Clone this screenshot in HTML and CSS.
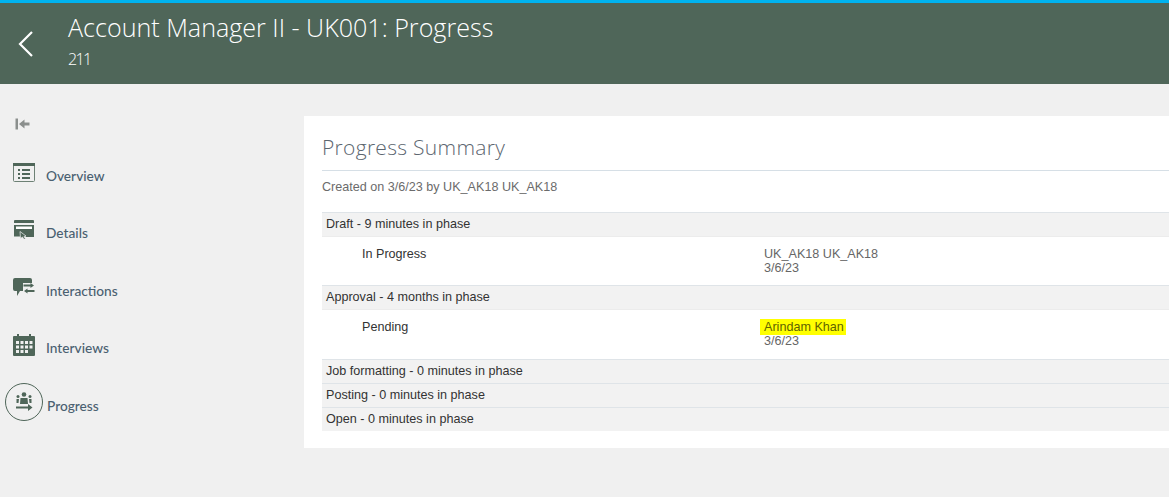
FILE: index.html
```html
<!DOCTYPE html>
<html lang="en">
<head>
    <meta charset="UTF-8">
    <title>Progress</title>
    <link rel="stylesheet" href="styles.css">
</head>
<body>

    <header class="page-header">
        <svg class="back-icon" viewBox="0 0 16 28" width="16" height="28"><path d="M14 2 L2 14 L14 26" fill="none" stroke="#fff" stroke-width="2.2"/></svg>
        <div class="header-text">
            <h1>Account Manager II - UK001: Progress</h1>
            <div class="header-sub">211</div>
        </div>
    </header>

    <div class="page-body">
        <nav class="side-nav">
            <svg class="collapse-icon" viewBox="0 0 15 12" width="15" height="12"><path d="M0.500 0.500h2.500v11H0.500z M14.500 4.500v3H9.500v3L4 6l5.500-4.500v3z" fill="#8b8f8d"/></svg>

            <a class="nav-item">
                <svg class="nav-icon" viewBox="0 0 22 19" width="22" height="19"><rect x="0.5" y="0.5" width="21" height="18" rx="1" fill="none" stroke="#6d8175"/><path d="M0 0h22v3H0z" fill="#4f6659"/><path d="M5 6h2v2H5z M9 6h8v2H9z M5 10h2v2H5z M9 10h8v2H9z M5 14h2v2H5z M9 14h8v2H9z" fill="#4f6659"/></svg>
                <span>Overview</span>
            </a>
            <a class="nav-item">
                <svg class="nav-icon" viewBox="0 0 22 19" width="22" height="19"><path d="M2 0h18a1 1 0 0 1 1 1v2H1V1a1 1 0 0 1 1-1z M1 5h20v12H13l-2-2H1z" fill="#4f6659"/><path d="M3 6.500h16v2.500H3z" fill="#fff"/><path d="M1 15h11v1.500H1z" fill="#4f6659"/><path d="M7 11.500l6 4.500-2 .5 1.500 2.500-1.500.5-1.500-2.500-2 1.500z" fill="#4f6659" stroke="#f0f0f0" stroke-width="0.7"/></svg>
                <span>Details</span>
            </a>
            <a class="nav-item">
                <svg class="nav-icon" viewBox="0 0 22 19" width="22" height="19"><path d="M2 0h15a2 2 0 0 1 2 2v3H10v8H7l-3 5v-5H2a2 2 0 0 1-2-2V2a2 2 0 0 1 2-2z" fill="#4f6659"/><path d="M10.500 6.500h7V5l3.500 2.500L17.500 10V8.500h-7z M21.500 12h-7v-1.500L11 13l3.500 2.500V14h7z" fill="#4f6659"/></svg>
                <span>Interactions</span>
            </a>
            <a class="nav-item">
                <svg class="nav-icon" viewBox="0 0 22 22" width="22" height="22"><path fill-rule="evenodd" fill="#4f6659" d="M1 2h3V0h2v2h10V0h2v2h3a1 1 0 0 1 1 1v18a1 1 0 0 1-1 1H1a1 1 0 0 1-1-1V3a1 1 0 0 1 1-1z M3 7v3h3V7z M7.500 7v3h3V7z M12 7v3h3V7z M16.500 7v3h3V7z M3 11.500v3h3v-3z M7.500 11.500v3h3v-3z M12 11.500v3h3v-3z M16.500 11.500v3h3v-3z M3 16v3h3v-3z M7.500 16v3h3v-3z M12 16v3h3v-3z"/></svg>
                <span>Interviews</span>
            </a>
            <a class="nav-item nav-item-active">
                <span class="nav-circle">
                    <svg viewBox="0 0 18 20" width="18" height="20"><circle cx="9" cy="2.500" r="2.300" fill="#4f6659"/><circle cx="3" cy="4.500" r="1.500" fill="#4f6659"/><circle cx="15" cy="4.500" r="1.500" fill="#4f6659"/><path d="M5.500 6h7l.5 6H5z M1.500 7h2.500l-.5 4h-2z M14 7h2.500v4h-2z" fill="#4f6659"/><path d="M1 14.500h12V12l4.500 3.500L13 19v-2.500H1z" fill="#4f6659"/></svg>
                </span>
                <span>Progress</span>
            </a>
        </nav>

        <main class="summary-card">
            <h2>Progress Summary</h2>
            <p class="created-line">Created on 3/6/23 by UK_AK18 UK_AK18</p>

            <div class="phase-row">Draft - 9 minutes in phase</div>
            <div class="step-row">
                <div class="step-name">In Progress</div>
                <div class="step-owner">UK_AK18 UK_AK18<br>3/6/23</div>
            </div>
            <div class="phase-row">Approval - 4 months in phase</div>
            <div class="step-row step-row-tall">
                <div class="step-name">Pending</div>
                <div class="step-owner"><mark>Arindam Khan</mark><br>3/6/23</div>
            </div>
            <div class="phase-row">Job formatting - 0 minutes in phase</div>
            <div class="phase-row">Posting - 0 minutes in phase</div>
            <div class="phase-row">Open - 0 minutes in phase</div>
        </main>
    </div>

</body>
</html>
```

FILE: styles.css
```css
* {
    margin: 0;
    padding: 0;
    box-sizing: border-box;
}

html, body {
    height: 100%;
    overflow: hidden;
}

body {
    background-color: #f0f0f0;
    font-family: "Liberation Sans", Arial, sans-serif;
    font-size: 12.6px;
    color: #333;
}

.page-header {
    height: 84px;
    border-top: 3px solid #00b3f0;
    background-color: #4f6659;
    color: #fff;
    display: flex;
    align-items: flex-start;
    padding-left: 18px;
}

.back-icon {
    margin-top: 27px;
}

.header-text {
    margin-left: 34px;
    padding-top: 8px;
}

h1 {
    font-family: "Open Sans", sans-serif;
    font-weight: 300;
    font-size: 25.1px;
    line-height: 33px;
    white-space: nowrap;
}

.header-sub {
    font-family: "Open Sans", sans-serif;
    font-weight: 300;
    font-size: 16px;
    line-height: 22px;
    margin-top: 4px;
    letter-spacing: -1.6px;
}

.page-body {
    display: flex;
    align-items: flex-start;
    padding-top: 33px;
}

.side-nav {
    width: 304px;
    flex-shrink: 0;
    display: flex;
    flex-direction: column;
    padding-top: 1px;
}

.collapse-icon {
    margin-left: 15px;
    margin-bottom: 16.7px;
}

.nav-item {
    display: flex;
    align-items: center;
    height: 57.5px;
    padding-left: 13px;
    font-family: Lato, sans-serif;
    font-size: 13.7px;
    font-weight: 500;
    color: #4a6070;
}

.nav-icon {
    width: 22px;
    margin-right: 11px;
    margin-bottom: 6px;
    flex-shrink: 0;
}

.nav-item-active {
    padding-left: 5px;
}

.nav-circle {
    width: 38px;
    height: 38px;
    border: 1px solid #4f6659;
    border-radius: 50%;
    display: flex;
    align-items: center;
    justify-content: center;
    margin-right: 4px;
    margin-bottom: 6px;
}

.summary-card {
    flex: 1;
    height: 332px;
    margin-top: -1px;
    background-color: #fff;
    padding: 16px 0 0 18px;
}

h2 {
    font-family: "Open Sans", sans-serif;
    font-weight: 300;
    font-size: 21px;
    line-height: 30px;
    color: #5c6670;
    padding-bottom: 8px;
    border-bottom: 1px solid #d6dfe6;
    letter-spacing: 0.3px;
}

.created-line {
    color: #6b6b6b;
    line-height: 14px;
    margin-top: 9px;
    margin-bottom: 18px;
}

.phase-row {
    height: 24px;
    line-height: 23px;
    padding-left: 4px;
    background-color: #f2f2f2;
    border-top: 1px solid #dfe4e8;
    color: #333;
}

.step-row {
    display: flex;
    height: 49px;
    background-color: #fff;
    padding-top: 10px;
    border-top: 1px solid #ececec;
}

.step-row-tall {
    height: 50px;
}

.step-name {
    width: 442px;
    padding-left: 40px;
    line-height: 14px;
}

.step-owner {
    color: #666;
    line-height: 14px;
}

mark {
    background-color: #ffff00;
    color: #5f6300;
    padding: 1px 2px 1px 4px;
    margin-left: -4px;
}
```
